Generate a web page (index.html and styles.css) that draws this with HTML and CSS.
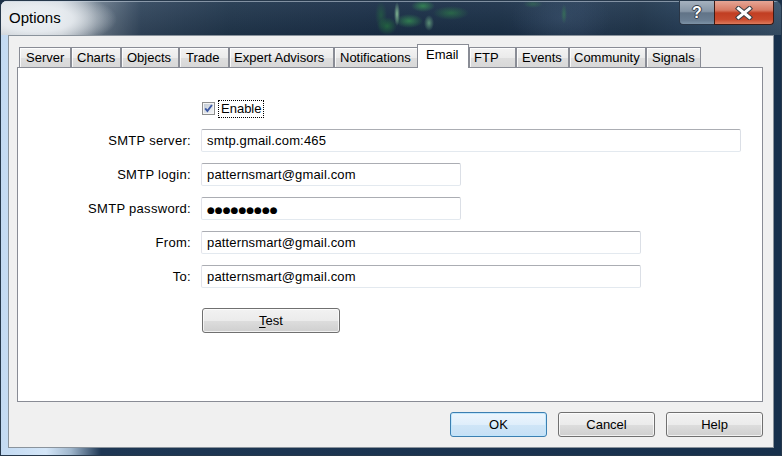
FILE: index.html
```html
<!DOCTYPE html>
<html>
<head>
<meta charset="utf-8">
<title>Options</title>
<link rel="stylesheet" href="styles.css">
</head>
<body>
<div class="window">
  <div class="titlebar">
    <div class="title">Options</div>
    <div class="caption">
      <div class="cap-btn help">?</div>
      <div class="cap-btn close">
        <svg width="18" height="14" viewBox="0 0 18 14">
          <path d="M3.5 2.5 L14.5 11.5 M14.5 2.5 L3.5 11.5" stroke="#3b3f45" stroke-width="5" stroke-linecap="square" fill="none"/>
          <path d="M3.5 2.5 L14.5 11.5 M14.5 2.5 L3.5 11.5" stroke="#ffffff" stroke-width="3" stroke-linecap="square" fill="none"/>
        </svg>
      </div>
    </div>
  </div>
  <div class="client">
    <div class="tabs">
      <div class="tab t-server">Server</div>
      <div class="tab t-charts">Charts</div>
      <div class="tab t-objects">Objects</div>
      <div class="tab t-trade">Trade</div>
      <div class="tab t-expert">Expert Advisors</div>
      <div class="tab t-notif">Notifications</div>
      <div class="tab t-email active">Email</div>
      <div class="tab t-ftp">FTP</div>
      <div class="tab t-events">Events</div>
      <div class="tab t-community">Community</div>
      <div class="tab t-signals">Signals</div>
    </div>
    <div class="panel">
      <div class="form">
        <div class="lbl"></div>
        <div class="check">
          <span class="box">
            <svg width="13" height="13" viewBox="0 0 13 13">
              <defs>
                <linearGradient id="cb" x1="0" y1="0" x2="1" y2="1">
                  <stop offset="0" stop-color="#c4ccd6"/>
                  <stop offset="1" stop-color="#f1f3f5"/>
                </linearGradient>
              </defs>
              <rect x="0.5" y="0.5" width="12" height="12" fill="#f4f4f4" stroke="#8e8f8f"/>
              <rect x="2" y="2" width="9" height="9" fill="url(#cb)"/>
              <path d="M3.2 6.4 L5.4 9 L9.9 3" stroke="#3d59a4" stroke-width="1.9" fill="none"/>
            </svg>
          </span>
          <span class="focus">Enable</span>
        </div>

        <div class="lbl">SMTP server:</div>
        <div class="field w-lg">smtp.gmail.com:465</div>

        <div class="lbl">SMTP login:</div>
        <div class="field w-sm">patternsmart@gmail.com</div>

        <div class="lbl">SMTP password:</div>
        <div class="field w-sm"><span class="dots">●●●●●●●●●</span></div>

        <div class="lbl">From:</div>
        <div class="field w-md">patternsmart@gmail.com</div>

        <div class="lbl">To:</div>
        <div class="field w-md">patternsmart@gmail.com</div>

        <div class="lbl"></div>
        <div class="btn test"><u>T</u>est</div>
      </div>
    </div>
    <div class="buttons">
      <div class="btn default">OK</div>
      <div class="btn">Cancel</div>
      <div class="btn">Help</div>
    </div>
  </div>
</div>
</body>
</html>
```
FILE: styles.css
```css
html, body {
  margin: 0;
  padding: 0;
  width: 782px;
  height: 456px;
  overflow: hidden;
  background: #1b3048;
}

body {
  font-family: "Liberation Sans", Arial, sans-serif;
  font-size: 13px;
  color: #000;
}

.window {
  width: 782px;
  height: 456px;
  box-sizing: border-box;
  border: 1px solid #26384b;
  border-radius: 7px 7px 0 0;
  overflow: hidden;
  display: flex;
  flex-direction: column;
  background: linear-gradient(to right, #c3daf2 0, #d4e6f8 45px, #9fb6cc 70px, #1e3754 100px, #17304c 100%);
}

/* ---------- title bar ---------- */
.titlebar {
  height: 34px;
  flex: none;
  display: flex;
  justify-content: space-between;
  align-items: flex-start;
  box-shadow: inset 0 1px 0 rgba(200,212,224,0.55);
  background:
    radial-gradient(ellipse 80px 28px at 36px 18px, rgba(236,240,244,1) 0, rgba(236,240,244,0.85) 45%, rgba(236,240,244,0) 100%),
    radial-gradient(ellipse 3px 12px at 396px 13px, rgba(160,225,170,0.75), rgba(160,225,170,0) 100%),
    radial-gradient(ellipse 14px 7px at 408px 20px, rgba(60,170,85,0.6), rgba(60,170,85,0) 100%),
    radial-gradient(ellipse 12px 6px at 422px 5px, rgba(60,175,85,0.6), rgba(60,175,85,0) 100%),
    radial-gradient(ellipse 5px 8px at 428px 22px, rgba(130,205,150,0.6), rgba(130,205,150,0) 100%),
    radial-gradient(ellipse 18px 7px at 450px 12px, rgba(50,150,70,0.5), rgba(50,150,70,0) 100%),
    radial-gradient(ellipse 10px 9px at 386px 25px, rgba(40,140,60,0.55), rgba(40,140,60,0) 100%),
    radial-gradient(ellipse 6px 14px at 380px 14px, rgba(40,130,60,0.4), rgba(40,130,60,0) 100%),
    radial-gradient(ellipse 3px 10px at 563px 13px, rgba(60,150,80,0.45), rgba(60,150,80,0) 100%),
    radial-gradient(ellipse 10px 4px at 532px 3px, rgba(60,150,80,0.35), rgba(60,150,80,0) 100%),
    radial-gradient(ellipse 50px 30px at 560px 17px, rgba(70,95,125,0.35), rgba(70,95,125,0) 100%),
    linear-gradient(to bottom, rgba(255,255,255,0.05), rgba(0,0,0,0.12)),
    linear-gradient(to right, #d9dfe5 0, #c6ced6 60px, #6f7f8f 95px, #33485f 140px, #22384f 230px, #1b3049 380px, #1c324a 500px, #263c56 580px, #22384f 640px, #2a445f 700px, #3a546d 782px);
}

.title {
  padding-left: 8px;
  height: 34px;
  line-height: 34px;
  font-size: 15px;
  color: #000;
}

.caption {
  display: flex;
  margin-right: 7px;
}

.cap-btn {
  height: 24px;
  box-sizing: border-box;
  display: flex;
  align-items: center;
  justify-content: center;
}

.help {
  width: 35px;
  border: 1px solid #2a3646;
  border-top: none;
  border-right: none;
  border-radius: 0 0 0 4px;
  background: linear-gradient(to bottom, #a6b2bf 0, #8595a6 45%, #617387 52%, #6a7e93 85%, #7d92a6 100%);
  color: #fff;
  font-weight: bold;
  font-size: 16px;
  text-shadow: 0 0 1px #1c232c, 1px 0 0 #3a4350, -1px 0 0 #3a4350, 0 1px 0 #3a4350, 0 -1px 0 #3a4350;
}

.close {
  width: 60px;
  border: 1px solid #3e1a14;
  border-top: none;
  border-radius: 0 0 4px 0;
  background: linear-gradient(to bottom, #e6a696 0, #d77a63 40%, #c13e22 52%, #c9492c 80%, #dc7a5c 100%);
}

/* ---------- client area ---------- */
.client {
  flex: 1;
  margin: 0 7px 7px 7px;
  border: 1px solid #8a939c;
  background: #f0f0f0;
  padding: 8px 10px 10px 8px;
  display: flex;
  flex-direction: column;
}

.tabs {
  display: flex;
  align-items: flex-end;
  height: 24px;
  padding-left: 2px;
  flex: none;
}

.tab {
  height: 20px;
  box-sizing: border-box;
  flex: none;
  margin-bottom: 1px;
  padding-left: 5px;
  border: 1px solid #898c95;
  border-bottom: none;
  box-shadow: inset 1px 1px 0 rgba(255,255,255,0.8);
  line-height: 19px;
  text-align: left;
  white-space: nowrap;
  overflow: hidden;
  background: linear-gradient(to bottom, #f3f3f3 0, #ebebeb 50%, #dedede 51%, #d8d8d8 100%);
}

.t-server { width: 52px; padding-left: 6px; }
.t-charts { width: 50px; }
.t-objects { width: 58px; }
.t-trade { width: 50px; padding-left: 6px; }
.t-expert { width: 105px; padding-left: 4px; }
.t-notif { width: 85px; }
.t-email { width: 52px; }
.t-ftp { width: 47px; padding-left: 4px; }
.t-events { width: 53px; }
.t-community { width: 77px; padding-left: 4px; }
.t-signals { width: 55px; }

.tab.active {
  height: 24px;
  margin: 0 0 0 -2px;
  padding-left: 8px;
  padding-bottom: 4px;
  background: #fff;
  box-shadow: none;
  position: relative;
  z-index: 1;
}

.panel {
  flex: 1;
  margin-top: -1px;
  border: 1px solid #898c95;
  background: #fff;
  padding-top: 32px;
}

.form {
  display: grid;
  grid-template-columns: 173px auto;
  column-gap: 10px;
  row-gap: 11px;
  align-items: center;
  justify-items: start;
}

.lbl {
  justify-self: end;
  line-height: 23px;
  white-space: nowrap;
  letter-spacing: 0.3px;
}

.check {
  display: flex;
  align-items: center;
  height: 18px;
  margin-left: 1px;
}

.box {
  width: 13px;
  height: 13px;
  display: block;
  margin-right: 3px;
  margin-top: -1px;
}

.box svg {
  display: block;
}

.focus {
  border: 1px dotted #000;
  padding: 0 2px 0 2px;
  line-height: 16px;
}

.field {
  height: 23px;
  box-sizing: border-box;
  border: 1px solid;
  border-color: #abadb3 #dbdfe6 #e3e9ef #e2e3ea;
  border-radius: 2px;
  padding-left: 5px;
  line-height: 21px;
  background: #fff;
  white-space: nowrap;
  letter-spacing: 0.15px;
}

.w-lg { width: 540px; }
.w-md { width: 440px; }
.w-sm { width: 260px; }

.dots {
  font-family: "DejaVu Sans", sans-serif;
  font-size: 9px;
  letter-spacing: 0;
}

/* ---------- buttons ---------- */
.btn {
  height: 25px;
  width: 97px;
  box-sizing: border-box;
  border: 1px solid #707070;
  border-radius: 3px;
  background: linear-gradient(to bottom, #f2f2f2 0, #ebebeb 50%, #dddddd 51%, #cfcfcf 100%);
  box-shadow: inset 0 0 0 1px rgba(255,255,255,0.7);
  text-align: center;
  line-height: 23px;
}

.btn.default {
  border-color: #3c7fb1;
  background: linear-gradient(to bottom, #edf6fd 0, #dfeefb 50%, #cfe5f7 51%, #c6e0f5 100%);
  box-shadow: inset 0 0 0 1px rgba(190,230,253,0.9);
}

.btn.test {
  width: 138px;
  margin-left: 1px;
  margin-top: 9px;
}

.btn u {
  text-decoration: underline;
  text-underline-offset: 2px;
}

.buttons {
  flex: none;
  display: flex;
  justify-content: flex-end;
  gap: 11px;
  margin-top: 10px;
}
```
